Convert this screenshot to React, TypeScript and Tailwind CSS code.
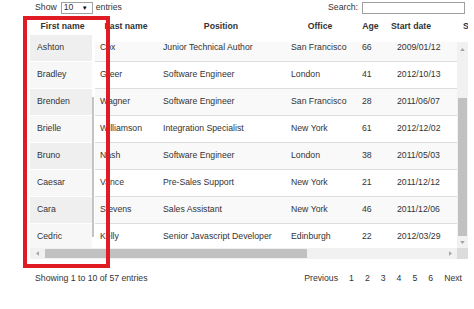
const ROWS = [
  ["Ashton", "Cox", "Junior Technical Author", "San Francisco", "66", "2009/01/12"],
  ["Bradley", "Greer", "Software Engineer", "London", "41", "2012/10/13"],
  ["Brenden", "Wagner", "Software Engineer", "San Francisco", "28", "2011/06/07"],
  ["Brielle", "Williamson", "Integration Specialist", "New York", "61", "2012/12/02"],
  ["Bruno", "Nash", "Software Engineer", "London", "38", "2011/05/03"],
  ["Caesar", "Vance", "Pre-Sales Support", "New York", "21", "2011/12/12"],
  ["Cara", "Stevens", "Sales Assistant", "New York", "46", "2011/12/06"],
  ["Cedric", "Kelly", "Senior Javascript Developer", "Edinburgh", "22", "2012/03/29"],
];

// widths of the scrolling columns (first name lives in the fixed column)
const COLS = [
  { w: "w-[62px]", pad: "pl-[5px]" },
  { w: "w-[128px]", pad: "pl-[6px]" },
  { w: "w-[70px]", pad: "pl-[6px]" },
  { w: "w-[31px]", pad: "pl-[7px]" },
  { w: "w-[64px]", pad: "pl-[11px]" },
  { w: "w-[60px]", pad: "pl-[13px]" },
];

function Tri({ dir }: { dir: "up" | "down" | "left" | "right" }) {
  const pts =
    dir === "up" ? "0,4 3,0 6,4" : dir === "down" ? "0,0 6,0 3,4" : dir === "left" ? "4,0 4,6 0,3" : "0,0 0,6 4,3";
  const box = dir === "up" || dir === "down" ? "0 0 6 4" : "0 0 4 6";
  return (
    <svg viewBox={box} className={dir === "up" || dir === "down" ? "w-[5px] h-[3px]" : "w-[3px] h-[5px]"}>
      <polygon points={pts} fill="#a3a3a3" />
    </svg>
  );
}

export default function App() {
  return (
    <div className="relative w-[474px] h-[309px] overflow-hidden bg-white text-[#333] text-[8.7px] font-['Liberation_Sans',Arial,sans-serif]">
      {/* TOP CONTROLS */}
      <div className="flex items-center h-[15px] pt-[1px] pl-[35px] pr-[9px]">
        <span>Show</span>
        <div className="ml-[4px] w-[32px] h-[12px] border border-[#a0a0a0] flex items-center justify-between pl-[2px] pr-[4px]">
          <span>10</span>
          <span className="text-[6px] text-black">▼</span>
        </div>
        <span className="ml-[3px]">entries</span>
        <span className="ml-auto">Search:</span>
        <div className="ml-[4px] w-[103px] h-[12px] border border-[#a0a0a0]" />
      </div>

      {/* TABLE */}
      <div className="mt-[4px] ml-[30px] flex flex-col">
        <div className="flex h-[229px]">
          {/* fixed first column */}
          <div className="w-[65px] flex flex-col bg-white">
            <div className="h-[16px] flex items-center justify-center font-bold">First name</div>
            <div className="flex h-[213px] overflow-hidden">
              <div className="w-[62px] flex flex-col">
                {ROWS.map((r, i) => (
                  <div
                    key={r[0]}
                    className={`h-[27px] shrink-0 flex items-center pl-[7px] border-b border-white ${i % 2 === 0 ? "bg-[#efefef]" : "bg-[#f7f7f7]"}`}
                  >
                    {r[0]}
                  </div>
                ))}
              </div>
              <div className="w-[3px] flex flex-col">
                <div className="h-[62px]" />
                <div className="h-[140px] w-[2px] bg-[#c4c4c4]" />
              </div>
            </div>
          </div>

          {/* scrolling part */}
          <div className="w-[373px] flex flex-col">
            <div className="h-[23px] flex items-start font-bold overflow-hidden">
              {["Last name", "Position", "Office", "Age", "Start date", "Salary"].map((h, i) => (
                <div
                  key={h}
                  className={`${COLS[i].w} shrink-0 h-[16px] flex items-center whitespace-nowrap ${
                    i === 5 ? "pl-[13px]" : i === 4 ? "justify-center pr-[14px]" : "justify-center"
                  }`}
                >
                  {h}
                </div>
              ))}
            </div>
            <div className="flex h-[206px]">
              <div className="w-[362px] overflow-hidden">
                <div className="-mt-[7px] flex flex-col">
                  {ROWS.map((r, i) => (
                    <div
                      key={r[1]}
                      className={`h-[27px] shrink-0 flex items-center border-b border-[#dddddd] whitespace-nowrap ${i % 2 === 0 ? "bg-[#f9f9f9]" : "bg-white"}`}
                    >
                      {r.slice(1).map((c, j) => (
                        <div key={j} className={`${COLS[j].w} ${COLS[j].pad} shrink-0 overflow-hidden`}>
                          {c}
                        </div>
                      ))}
                    </div>
                  ))}
                </div>
              </div>
              {/* vertical scrollbar */}
              <div className="w-[11px] bg-[#f1f1f1] flex flex-col items-center">
                <div className="h-[14px] flex items-center justify-center"><Tri dir="up" /></div>
                <div className="h-[42px]" />
                <div className="h-[138px] w-[9px] bg-[#c1c1c1]" />
                <div className="flex-1 flex items-center justify-center"><Tri dir="down" /></div>
              </div>
            </div>
          </div>
        </div>

        {/* horizontal scrollbar */}
        <div className="flex h-[11px]">
          <div className="w-[427px] bg-[#f1f1f1] flex items-center">
            <div className="w-[15px] flex justify-center"><Tri dir="left" /></div>
            <div className="w-[262px] h-[9px] bg-[#c1c1c1]" />
            <div className="flex-1" />
            <div className="w-[14px] flex justify-center"><Tri dir="right" /></div>
          </div>
          <div className="w-[11px] bg-[#dcdcdc]" />
        </div>
      </div>

      {/* FOOTER */}
      <div className="mt-[14px] flex items-center justify-between h-[12px] pl-[35px] pr-[12px]">
        <span>Showing 1 to 10 of 57 entries</span>
        <div className="flex gap-[11px]">
          {["Previous", "1", "2", "3", "4", "5", "6", "Next"].map((p) => (
            <span key={p}>{p}</span>
          ))}
        </div>
      </div>

      {/* annotation */}
      <div className="absolute left-[23px] top-[16px] w-[87px] h-[252px] border-4 border-[#e01b24]" />
    </div>
  );
}
